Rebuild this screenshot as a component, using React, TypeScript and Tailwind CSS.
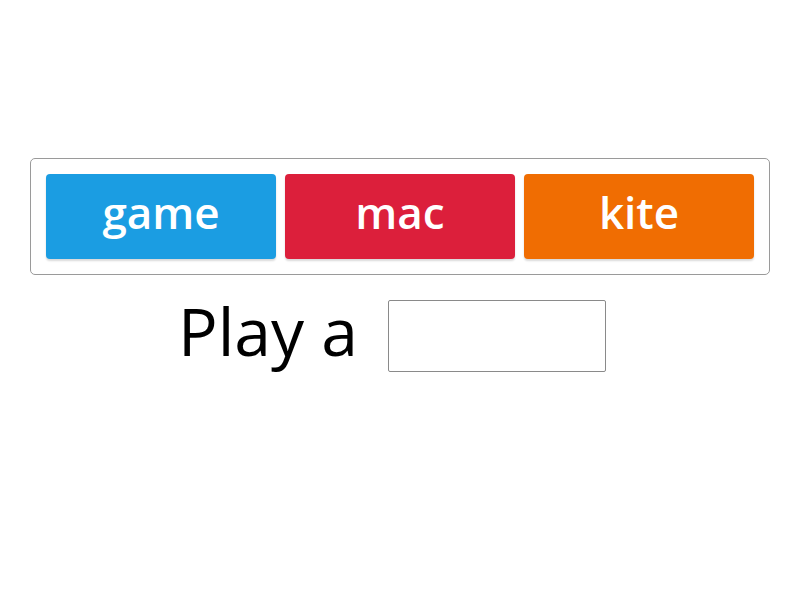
export default function App() {
  const words = [
    { label: 'game', bg: 'bg-[#1b9de2]' },
    { label: 'mac', bg: 'bg-[#dc1f3b]' },
    { label: 'kite', bg: 'bg-[#f06d02]' },
  ]

  return (
    <div className="h-[600px] w-[800px] bg-white pt-[158px] font-['Open_Sans',sans-serif]">
      <div className="mx-[30px] flex w-[740px] gap-[9px] rounded-[5px] border border-[#9a9a9a] p-[15px]">
        {words.map((w) => (
          <div
            key={w.label}
            className={`flex h-[85px] w-[230px] items-center justify-center rounded-[4px] pb-[10px] ${w.bg} shadow-[0_2px_2px_rgba(0,0,0,0.15)]`}
          >
            <span className="text-[44px] font-semibold leading-none text-white">{w.label}</span>
          </div>
        ))}
      </div>

      <div className="mt-[25px] flex items-start pl-[178px]">
        <span className="-mt-[15px] text-[66px] leading-[90px] text-black">Play a</span>
        <div className="ml-[30px] h-[72px] w-[218px] rounded-[2px] border border-[#8a8a8a] bg-white" />
      </div>
    </div>
  )
}
